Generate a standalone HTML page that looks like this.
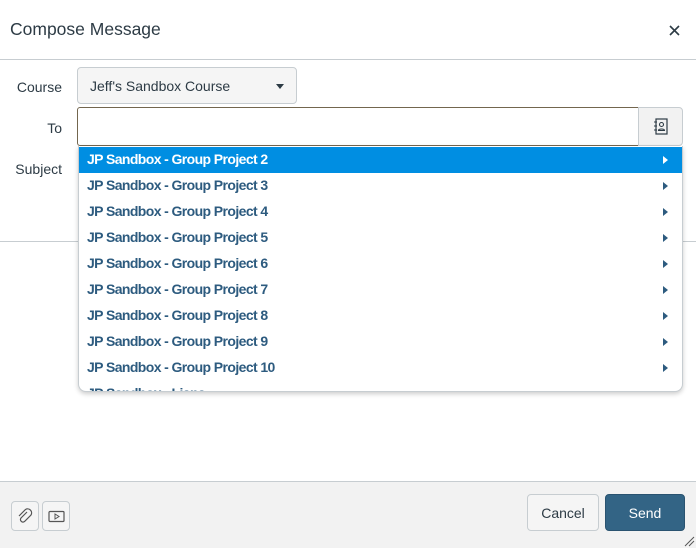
<!DOCTYPE html>
<html><head><style>
*{box-sizing:border-box;margin:0;padding:0}
body{width:696px;height:548px;background:#fff;font-family:"Liberation Sans",sans-serif;position:relative;overflow:hidden;color:#2d3b45}
.abs{position:absolute}
.lbl{font-size:14px;color:#2d3b45;text-align:right;width:62px;left:0}
.item{position:absolute;left:0;right:0;height:26px;line-height:25px;padding-left:8px;font-size:14px;color:#2d5b7f;font-weight:bold;letter-spacing:-0.6px}
.item .ar{position:absolute;right:14px;top:9px;width:0;height:0;border-left:5px solid #2d5b7f;border-top:4px solid transparent;border-bottom:4px solid transparent}
.item.sel{background:#008ee2;color:#fff}
.item.sel .ar{border-left-color:#fff}
.btn{position:absolute;border:1px solid #c7cdd1;border-radius:4px;background:#f5f5f5}
</style></head><body>
<div class="abs" style="left:10px;top:19px;font-size:17.5px;color:#2d3b45">Compose Message</div>
<svg class="abs" style="left:669px;top:25px" width="11" height="11"><path d="M1 1L10 10M10 1L1 10" stroke="#2d3b45" stroke-width="1.6"/></svg>
<div class="abs" style="left:0;right:0;top:59px;height:1px;background:#c7cdd1"></div>
<div class="abs lbl" style="top:79px">Course</div>
<div class="abs lbl" style="top:120px">To</div>
<div class="abs lbl" style="top:161px">Subject</div>
<div class="btn" style="left:77px;top:67px;width:220px;height:37px;background:#f5f5f5"><span class="abs" style="left:12px;top:10px;font-size:14px;color:#2d3b45">Jeff's Sandbox Course</span><span class="abs" style="right:12px;top:16px;border-top:5px solid #2d3b45;border-left:4px solid transparent;border-right:4px solid transparent"></span></div>
<div class="abs" style="left:77px;top:107px;width:562px;height:39px;border:1px solid #73664e;border-radius:3px 0 0 3px;background:#fff"></div>
<div class="btn" style="left:638px;top:107px;width:45px;height:39px;border-radius:0 4px 4px 0;background:#f2f2f2">
<svg class="abs" style="left:14px;top:10px" width="16" height="17" viewBox="0 0 16 17"><rect x="3" y="1" width="11" height="15" fill="none" stroke="#2d3b45" stroke-width="1.2"/><circle cx="8.5" cy="6.5" r="2" fill="none" stroke="#2d3b45" stroke-width="1.1"/><path d="M5.5 12.5c0-2 6-2 6 0z" fill="none" stroke="#2d3b45" stroke-width="1.1"/><path d="M1 4h3M1 8h3M1 12h3" stroke="#2d3b45"/></svg></div>
<div class="abs" style="left:0;right:0;top:241px;height:1px;background:#c7cdd1"></div>
<div class="abs" style="left:78px;top:146px;width:605px;height:246px;background:#fff;border:1px solid #c7cdd1;border-top:none;border-radius:0 0 8px 8px;box-shadow:0 2px 5px rgba(0,0,0,.2);overflow:hidden">
<div class="item sel" style="top:1px">JP Sandbox - Group Project 2<span class="ar"></span></div>
<div class="item" style="top:27px">JP Sandbox - Group Project 3<span class="ar"></span></div>
<div class="item" style="top:53px">JP Sandbox - Group Project 4<span class="ar"></span></div>
<div class="item" style="top:79px">JP Sandbox - Group Project 5<span class="ar"></span></div>
<div class="item" style="top:105px">JP Sandbox - Group Project 6<span class="ar"></span></div>
<div class="item" style="top:131px">JP Sandbox - Group Project 7<span class="ar"></span></div>
<div class="item" style="top:157px">JP Sandbox - Group Project 8<span class="ar"></span></div>
<div class="item" style="top:183px">JP Sandbox - Group Project 9<span class="ar"></span></div>
<div class="item" style="top:209px">JP Sandbox - Group Project 10<span class="ar"></span></div>
<div class="item" style="top:235px">JP Sandbox - Liana</div>
</div>
<div class="abs" style="left:0;right:0;top:481px;bottom:0;background:#f2f2f2;border-top:1px solid #c7cdd1"></div>
<div class="btn" style="left:11px;top:501px;width:28px;height:30px"><svg class="abs" style="left:5px;top:6px" width="17" height="17" viewBox="0 0 17 17"><path d="M10 4L4 10a2.5 2.5 0 0 0 3.5 3.5L14 7a4 4 0 0 0-5.5-5.5L2 8" fill="none" stroke="#555" stroke-width="1.2"/></svg></div>
<div class="btn" style="left:42px;top:501px;width:28px;height:30px"><svg class="abs" style="left:5px;top:8px" width="17" height="13" viewBox="0 0 17 13"><rect x="1" y="1.5" width="15" height="10" rx="1" fill="none" stroke="#555" stroke-width="1.2"/><path d="M7 4v5l4-2.5z" fill="none" stroke="#555"/></svg></div>
<div class="btn" style="left:527px;top:494px;width:72px;height:37px;text-align:center;line-height:36px;font-size:14px;color:#2d3b45">Cancel</div>
<div class="abs" style="left:605px;top:494px;width:80px;height:37px;border-radius:4px;background:#336485;border:1px solid #2a5370;text-align:center;line-height:36px;font-size:14px;color:#fff">Send</div>
<svg class="abs" style="left:683px;top:535px" width="12" height="12"><path d="M2 11L11 2M6 11L11 6" stroke="#555"/></svg>
</body></html>
